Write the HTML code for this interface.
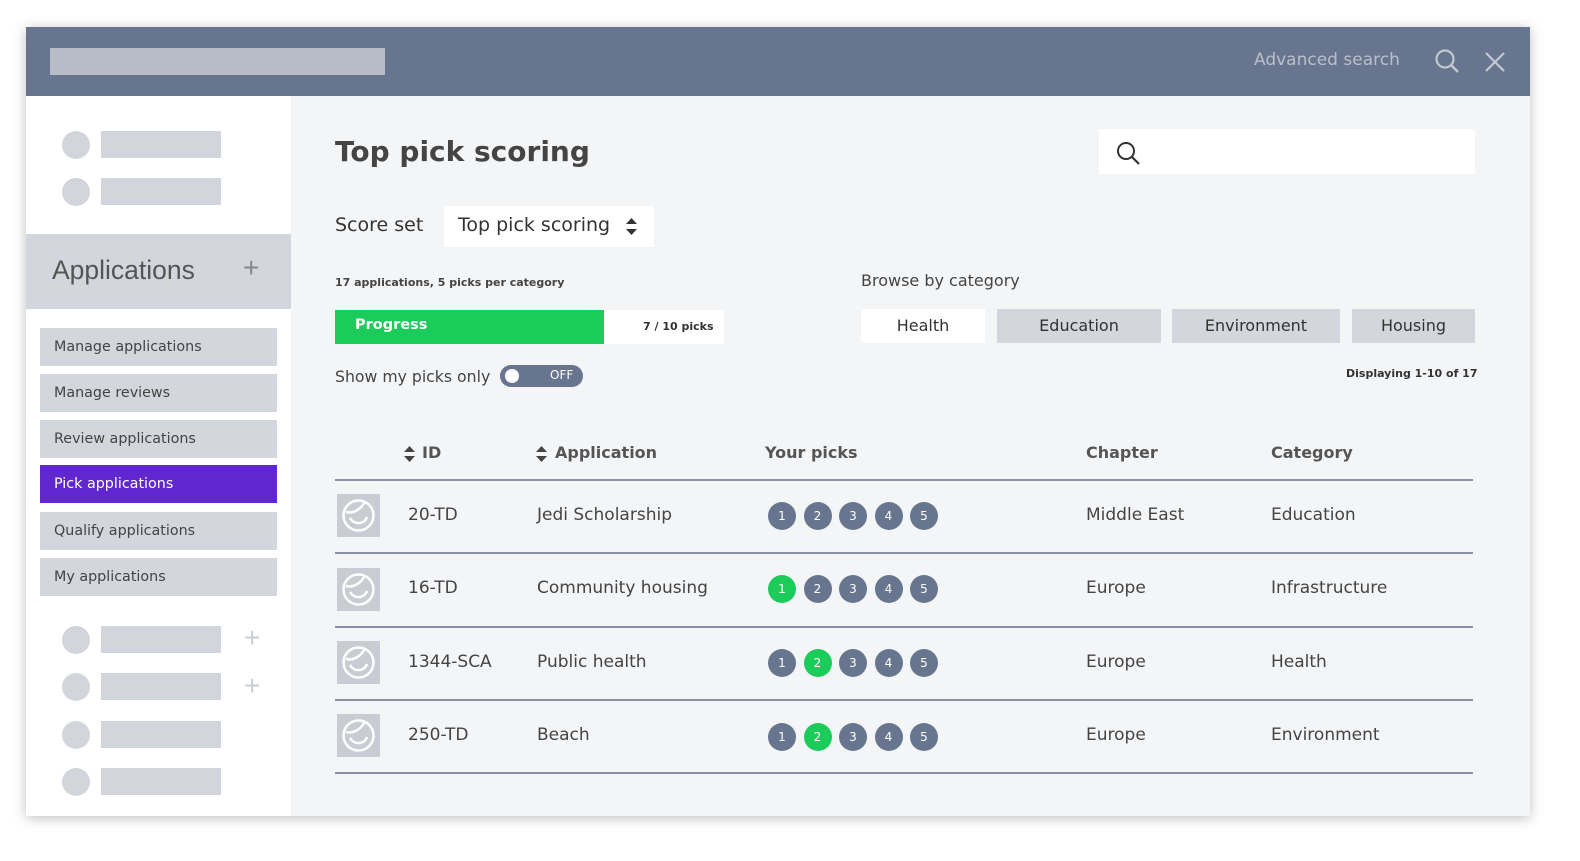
<!DOCTYPE html>
<html><head><meta charset="utf-8">
<style>
*{box-sizing:border-box;margin:0;padding:0}
body{width:1580px;height:861px;background:#fff;font-family:"DejaVu Sans","Liberation Sans",sans-serif;color:#444;position:relative;overflow:hidden}
.a{position:absolute;white-space:nowrap}
.win{left:26px;top:27px;width:1504px;height:789px;background:#f4f5f7;box-shadow:0 2px 12px rgba(0,0,0,.25)}
.hdr{left:26px;top:27px;width:1504px;height:69px;background:#67768e}
.side{left:26px;top:96px;width:265px;height:720px;background:#fff}
.circ{width:28px;height:28px;border-radius:50%;background:#d2d5dc}
.bar{width:120px;height:27px;background:#d2d5dc}
.nav{left:40px;width:237px;height:38px;background:#d3d6dd;font-size:14.3px;color:#444;padding-left:14px;line-height:38px}
.plus{font-size:28px;color:#c9ccd2;font-weight:200;font-family:"Liberation Sans",sans-serif}
.dot{display:inline-block;width:28px;height:28px;border-radius:50%;background:#67768e;color:#fff;font-size:12px;text-align:center;line-height:28px;margin-right:7.5px}
.g{background:#1ccc5b}
.row{font-size:17px;color:#444}
.line{left:335px;width:1138px;height:1.5px;background:#8a93a3}
.av{width:43px;height:43px;background:#c9ccd2}
.th{font-size:16px;font-weight:bold;color:#555}
.cat{height:34px;top:309px;text-align:center;line-height:34px;font-size:16px;background:#d3d6dd;color:#333}
</style></head><body>
<div class="a win"></div>
<div class="a hdr"></div>
<div class="a" style="left:50px;top:48px;width:335px;height:27px;background:#b7bcc6"></div>
<div class="a" style="left:1254px;top:50px;font-size:17px;color:#b9bfca">Advanced search</div>
<svg class="a" style="left:1434px;top:48px" width="28" height="28" viewBox="0 0 28 28"><circle cx="11" cy="11" r="8.5" fill="none" stroke="#c3c8d1" stroke-width="2.2"/><line x1="17" y1="17" x2="24" y2="24" stroke="#c3c8d1" stroke-width="2.4"/></svg>
<svg class="a" style="left:1484px;top:51px" width="22" height="22" viewBox="0 0 22 22"><path d="M2 2L20 20M20 2L2 20" stroke="#c3c8d1" stroke-width="2.2"/></svg>

<div class="a side"></div>
<div class="a circ" style="left:62px;top:131px"></div><div class="a bar" style="left:101px;top:131px"></div>
<div class="a circ" style="left:62px;top:178px"></div><div class="a bar" style="left:101px;top:178px"></div>
<div class="a" style="left:26px;top:234px;width:265px;height:75px;background:#d3d6dd"></div>
<div class="a" style="left:52px;top:255px;font-size:26.5px;color:#555;font-family:'Liberation Sans',sans-serif">Applications</div>
<div class="a plus" style="left:243px;top:252px;color:#888">+</div>
<div class="a nav" style="top:328px">Manage applications</div>
<div class="a nav" style="top:374px">Manage reviews</div>
<div class="a nav" style="top:420px">Review applications</div>
<div class="a nav" style="top:465px;background:#5f27cd;color:#fff">Pick applications</div>
<div class="a nav" style="top:512px">Qualify applications</div>
<div class="a nav" style="top:558px">My applications</div>
<div class="a circ" style="left:62px;top:626px"></div><div class="a bar" style="left:101px;top:626px"></div><div class="a plus" style="left:244px;top:622px">+</div>
<div class="a circ" style="left:62px;top:673px"></div><div class="a bar" style="left:101px;top:673px"></div><div class="a plus" style="left:244px;top:670px">+</div>
<div class="a circ" style="left:62px;top:721px"></div><div class="a bar" style="left:101px;top:721px"></div>
<div class="a circ" style="left:62px;top:768px"></div><div class="a bar" style="left:101px;top:768px"></div>

<div class="a" style="left:335px;top:135px;font-size:28px;font-weight:bold;color:#444">Top pick scoring</div>
<div class="a" style="left:1099px;top:129px;width:376px;height:45px;background:#fff"></div>
<svg class="a" style="left:1116px;top:141px" width="26" height="26" viewBox="0 0 26 26"><circle cx="10" cy="10" r="8" fill="none" stroke="#333" stroke-width="2"/><line x1="16" y1="16" x2="23" y2="23" stroke="#333" stroke-width="2.2"/></svg>

<div class="a" style="left:335px;top:214px;font-size:19px;color:#333">Score set</div>
<div class="a" style="left:444px;top:206px;width:210px;height:41px;background:#fff"></div>
<div class="a" style="left:458px;top:214px;font-size:19px;color:#333">Top pick scoring</div>
<svg class="a" style="left:626px;top:218px" width="11" height="17" viewBox="0 0 11 17"><path d="M5.5 0L11 6H0Z M5.5 17L11 11H0Z" fill="#333"/></svg>

<div class="a" style="left:335px;top:276px;font-size:11px;font-weight:bold;color:#444">17 applications, 5 picks per category</div>
<div class="a" style="left:335px;top:310px;width:389px;height:34px;background:#fff"></div>
<div class="a" style="left:335px;top:310px;width:269px;height:34px;background:#1ccc5b"></div>
<div class="a" style="left:355px;top:317px;font-size:14.5px;font-weight:bold;color:#fff">Progress</div>
<div class="a" style="left:643px;top:320px;font-size:11px;font-weight:bold;color:#333">7 / 10 picks</div>
<div class="a" style="left:335px;top:367px;font-size:15.7px;color:#444">Show my picks only</div>
<div class="a" style="left:500px;top:365px;width:83px;height:22px;border-radius:11px;background:#67768e"></div>
<div class="a" style="left:505px;top:369px;width:14px;height:14px;border-radius:50%;background:#fff"></div>
<div class="a" style="left:550px;top:368px;font-size:12px;color:#fff">OFF</div>

<div class="a" style="left:861px;top:271px;font-size:16px;color:#444">Browse by category</div>
<div class="a cat" style="left:861px;width:124px;background:#fff">Health</div>
<div class="a cat" style="left:997px;width:164px">Education</div>
<div class="a cat" style="left:1172px;width:168px">Environment</div>
<div class="a cat" style="left:1352px;width:123px">Housing</div>
<div class="a" style="left:1346px;top:367px;font-size:11px;font-weight:bold;color:#333">Displaying 1-10 of 17</div>

<svg class="a" style="left:404px;top:446px" width="11" height="16" viewBox="0 0 11 16"><path d="M5.5 0L11 6H0Z M5.5 16L11 10H0Z" fill="#444"/></svg>
<div class="a th" style="left:422px;top:443px">ID</div>
<svg class="a" style="left:536px;top:446px" width="11" height="16" viewBox="0 0 11 16"><path d="M5.5 0L11 6H0Z M5.5 16L11 10H0Z" fill="#444"/></svg>
<div class="a th" style="left:555px;top:443px">Application</div>
<div class="a th" style="left:765px;top:443px">Your picks</div>
<div class="a th" style="left:1086px;top:443px">Chapter</div>
<div class="a th" style="left:1271px;top:443px">Category</div>
<div class="a line" style="top:479px"></div>
<div class="a line" style="top:552px"></div>
<div class="a line" style="top:626px"></div>
<div class="a line" style="top:699px"></div>
<div class="a line" style="top:772px"></div>

<div class="a av" style="left:337px;top:494px"></div>
<div class="a av" style="left:337px;top:568px"></div>
<div class="a av" style="left:337px;top:641px"></div>
<div class="a av" style="left:337px;top:714px"></div>
<svg class="a" style="left:337px;top:494px" width="43" height="43" viewBox="0 0 43 43"><circle cx="21.5" cy="21.5" r="15" fill="none" stroke="#fff" stroke-width="2.5"/><path d="M9 18C16 20 24 15 27 9M13 24C17 31 27 31 30 23" fill="none" stroke="#fff" stroke-width="2.5"/></svg>
<svg class="a" style="left:337px;top:568px" width="43" height="43" viewBox="0 0 43 43"><circle cx="21.5" cy="21.5" r="15" fill="none" stroke="#fff" stroke-width="2.5"/><path d="M9 18C16 20 24 15 27 9M13 24C17 31 27 31 30 23" fill="none" stroke="#fff" stroke-width="2.5"/></svg>
<svg class="a" style="left:337px;top:641px" width="43" height="43" viewBox="0 0 43 43"><circle cx="21.5" cy="21.5" r="15" fill="none" stroke="#fff" stroke-width="2.5"/><path d="M9 18C16 20 24 15 27 9M13 24C17 31 27 31 30 23" fill="none" stroke="#fff" stroke-width="2.5"/></svg>
<svg class="a" style="left:337px;top:714px" width="43" height="43" viewBox="0 0 43 43"><circle cx="21.5" cy="21.5" r="15" fill="none" stroke="#fff" stroke-width="2.5"/><path d="M9 18C16 20 24 15 27 9M13 24C17 31 27 31 30 23" fill="none" stroke="#fff" stroke-width="2.5"/></svg>

<div class="a row" style="left:408px;top:505px">20-TD</div>
<div class="a row" style="left:537px;top:505px">Jedi Scholarship</div>
<div class="a" style="left:768px;top:502px"><span class="dot">1</span><span class="dot">2</span><span class="dot">3</span><span class="dot">4</span><span class="dot">5</span></div>
<div class="a row" style="left:1086px;top:505px">Middle East</div>
<div class="a row" style="left:1271px;top:505px">Education</div>

<div class="a row" style="left:408px;top:578px">16-TD</div>
<div class="a row" style="left:537px;top:578px">Community housing</div>
<div class="a" style="left:768px;top:575px"><span class="dot g">1</span><span class="dot">2</span><span class="dot">3</span><span class="dot">4</span><span class="dot">5</span></div>
<div class="a row" style="left:1086px;top:578px">Europe</div>
<div class="a row" style="left:1271px;top:578px">Infrastructure</div>

<div class="a row" style="left:408px;top:652px">1344-SCA</div>
<div class="a row" style="left:537px;top:652px">Public health</div>
<div class="a" style="left:768px;top:649px"><span class="dot">1</span><span class="dot g">2</span><span class="dot">3</span><span class="dot">4</span><span class="dot">5</span></div>
<div class="a row" style="left:1086px;top:652px">Europe</div>
<div class="a row" style="left:1271px;top:652px">Health</div>

<div class="a row" style="left:408px;top:725px">250-TD</div>
<div class="a row" style="left:537px;top:725px">Beach</div>
<div class="a" style="left:768px;top:723px"><span class="dot">1</span><span class="dot g">2</span><span class="dot">3</span><span class="dot">4</span><span class="dot">5</span></div>
<div class="a row" style="left:1086px;top:725px">Europe</div>
<div class="a row" style="left:1271px;top:725px">Environment</div>
</body></html>
